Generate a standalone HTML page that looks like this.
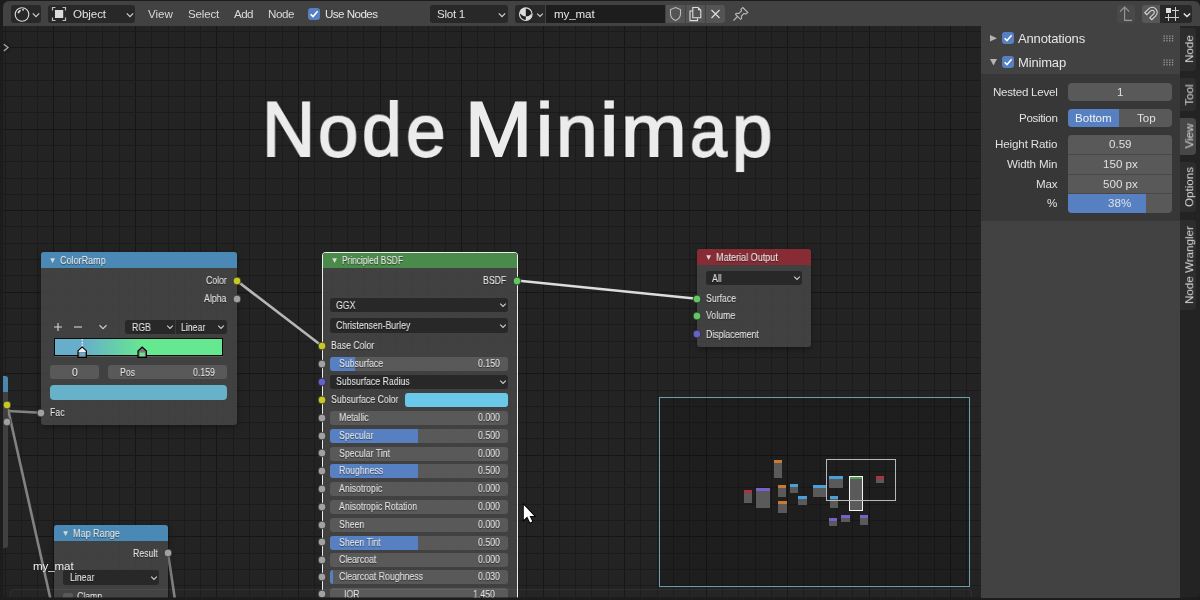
<!DOCTYPE html><html><head><meta charset="utf-8"><style>

*{box-sizing:border-box;margin:0;padding:0}
html,body{width:1200px;height:600px;overflow:hidden;background:#1c1c1c;font-family:"Liberation Sans", sans-serif;color:#e6e6e6}
.abs{position:absolute}
.t{position:absolute;white-space:nowrap;line-height:1;will-change:transform}

</style></head><body>
<div class="abs" style="left:3px;top:25px;width:1197px;height:573px;background:#232323;border-radius:0 0 5px 5px"></div>
<svg width="978" height="572" style="position:absolute;left:3px;top:26px"><rect x="2" y="0" width="1" height="572" fill="#1b1b1b"/><rect x="18" y="0" width="1" height="572" fill="#1b1b1b"/><rect x="34" y="0" width="1" height="572" fill="#1b1b1b"/><rect x="50" y="0" width="1" height="572" fill="#161616"/><rect x="67" y="0" width="1" height="572" fill="#1b1b1b"/><rect x="83" y="0" width="1" height="572" fill="#1b1b1b"/><rect x="99" y="0" width="1" height="572" fill="#1b1b1b"/><rect x="116" y="0" width="1" height="572" fill="#1b1b1b"/><rect x="132" y="0" width="1" height="572" fill="#161616"/><rect x="148" y="0" width="1" height="572" fill="#1b1b1b"/><rect x="165" y="0" width="1" height="572" fill="#1b1b1b"/><rect x="181" y="0" width="1" height="572" fill="#1b1b1b"/><rect x="197" y="0" width="1" height="572" fill="#1b1b1b"/><rect x="213" y="0" width="1" height="572" fill="#161616"/><rect x="230" y="0" width="1" height="572" fill="#1b1b1b"/><rect x="246" y="0" width="1" height="572" fill="#1b1b1b"/><rect x="262" y="0" width="1" height="572" fill="#1b1b1b"/><rect x="279" y="0" width="1" height="572" fill="#1b1b1b"/><rect x="295" y="0" width="1" height="572" fill="#161616"/><rect x="311" y="0" width="1" height="572" fill="#1b1b1b"/><rect x="328" y="0" width="1" height="572" fill="#1b1b1b"/><rect x="344" y="0" width="1" height="572" fill="#1b1b1b"/><rect x="360" y="0" width="1" height="572" fill="#1b1b1b"/><rect x="377" y="0" width="1" height="572" fill="#161616"/><rect x="393" y="0" width="1" height="572" fill="#1b1b1b"/><rect x="409" y="0" width="1" height="572" fill="#1b1b1b"/><rect x="425" y="0" width="1" height="572" fill="#1b1b1b"/><rect x="442" y="0" width="1" height="572" fill="#1b1b1b"/><rect x="458" y="0" width="1" height="572" fill="#161616"/><rect x="474" y="0" width="1" height="572" fill="#1b1b1b"/><rect x="491" y="0" width="1" height="572" fill="#1b1b1b"/><rect x="507" y="0" width="1" height="572" fill="#1b1b1b"/><rect x="523" y="0" width="1" height="572" fill="#1b1b1b"/><rect x="540" y="0" width="1" height="572" fill="#161616"/><rect x="556" y="0" width="1" height="572" fill="#1b1b1b"/><rect x="572" y="0" width="1" height="572" fill="#1b1b1b"/><rect x="588" y="0" width="1" height="572" fill="#1b1b1b"/><rect x="605" y="0" width="1" height="572" fill="#1b1b1b"/><rect x="621" y="0" width="1" height="572" fill="#161616"/><rect x="637" y="0" width="1" height="572" fill="#1b1b1b"/><rect x="654" y="0" width="1" height="572" fill="#1b1b1b"/><rect x="670" y="0" width="1" height="572" fill="#1b1b1b"/><rect x="686" y="0" width="1" height="572" fill="#1b1b1b"/><rect x="703" y="0" width="1" height="572" fill="#161616"/><rect x="719" y="0" width="1" height="572" fill="#1b1b1b"/><rect x="735" y="0" width="1" height="572" fill="#1b1b1b"/><rect x="752" y="0" width="1" height="572" fill="#1b1b1b"/><rect x="768" y="0" width="1" height="572" fill="#1b1b1b"/><rect x="784" y="0" width="1" height="572" fill="#161616"/><rect x="800" y="0" width="1" height="572" fill="#1b1b1b"/><rect x="817" y="0" width="1" height="572" fill="#1b1b1b"/><rect x="833" y="0" width="1" height="572" fill="#1b1b1b"/><rect x="849" y="0" width="1" height="572" fill="#1b1b1b"/><rect x="866" y="0" width="1" height="572" fill="#161616"/><rect x="882" y="0" width="1" height="572" fill="#1b1b1b"/><rect x="898" y="0" width="1" height="572" fill="#1b1b1b"/><rect x="915" y="0" width="1" height="572" fill="#1b1b1b"/><rect x="931" y="0" width="1" height="572" fill="#1b1b1b"/><rect x="947" y="0" width="1" height="572" fill="#161616"/><rect x="963" y="0" width="1" height="572" fill="#1b1b1b"/><rect x="0" y="5" width="978" height="1" fill="#1b1b1b"/><rect x="0" y="21" width="978" height="1" fill="#161616"/><rect x="0" y="37" width="978" height="1" fill="#1b1b1b"/><rect x="0" y="54" width="978" height="1" fill="#1b1b1b"/><rect x="0" y="70" width="978" height="1" fill="#1b1b1b"/><rect x="0" y="86" width="978" height="1" fill="#1b1b1b"/><rect x="0" y="103" width="978" height="1" fill="#161616"/><rect x="0" y="119" width="978" height="1" fill="#1b1b1b"/><rect x="0" y="135" width="978" height="1" fill="#1b1b1b"/><rect x="0" y="152" width="978" height="1" fill="#1b1b1b"/><rect x="0" y="168" width="978" height="1" fill="#1b1b1b"/><rect x="0" y="184" width="978" height="1" fill="#161616"/><rect x="0" y="200" width="978" height="1" fill="#1b1b1b"/><rect x="0" y="217" width="978" height="1" fill="#1b1b1b"/><rect x="0" y="233" width="978" height="1" fill="#1b1b1b"/><rect x="0" y="249" width="978" height="1" fill="#1b1b1b"/><rect x="0" y="266" width="978" height="1" fill="#161616"/><rect x="0" y="282" width="978" height="1" fill="#1b1b1b"/><rect x="0" y="298" width="978" height="1" fill="#1b1b1b"/><rect x="0" y="315" width="978" height="1" fill="#1b1b1b"/><rect x="0" y="331" width="978" height="1" fill="#1b1b1b"/><rect x="0" y="347" width="978" height="1" fill="#161616"/><rect x="0" y="364" width="978" height="1" fill="#1b1b1b"/><rect x="0" y="380" width="978" height="1" fill="#1b1b1b"/><rect x="0" y="396" width="978" height="1" fill="#1b1b1b"/><rect x="0" y="412" width="978" height="1" fill="#1b1b1b"/><rect x="0" y="429" width="978" height="1" fill="#161616"/><rect x="0" y="445" width="978" height="1" fill="#1b1b1b"/><rect x="0" y="461" width="978" height="1" fill="#1b1b1b"/><rect x="0" y="478" width="978" height="1" fill="#1b1b1b"/><rect x="0" y="494" width="978" height="1" fill="#1b1b1b"/><rect x="0" y="510" width="978" height="1" fill="#161616"/><rect x="0" y="527" width="978" height="1" fill="#1b1b1b"/><rect x="0" y="543" width="978" height="1" fill="#1b1b1b"/><rect x="0" y="559" width="978" height="1" fill="#1b1b1b"/></svg>
<div class="abs" style="left:3px;top:41px;width:7px;height:13px;background:#1e1e1e;border-radius:0 5px 5px 0;"></div>
<svg class="abs" style="left:3px;top:43px;" width="8" height="10" viewBox="0 0 8 10"><path d="M0.8 1.3 L5 4.6 L0.8 7.9" fill="none" stroke="#a8a8a8" stroke-width="1.3"/></svg>
<div class="t" style="left:261.92px;top:91.20px;font-size:77px;color:#ececec;-webkit-text-stroke:1.8px #ececec;text-shadow:1px 1px 1px rgba(0,0,0,0.7);transform:scale(0.9556,1.0);transform-origin:0 66px">N</div>
<div class="t" style="left:318.12px;top:91.20px;font-size:77px;color:#ececec;-webkit-text-stroke:1.8px #ececec;text-shadow:1px 1px 1px rgba(0,0,0,0.7);transform:scale(0.9410,0.94);transform-origin:0 66px">o</div>
<div class="t" style="left:362.15px;top:91.20px;font-size:77px;color:#ececec;-webkit-text-stroke:1.8px #ececec;text-shadow:1px 1px 1px rgba(0,0,0,0.7);transform:scale(0.9270,0.966);transform-origin:0 66px">d</div>
<div class="t" style="left:405.66px;top:91.20px;font-size:77px;color:#ececec;-webkit-text-stroke:1.8px #ececec;text-shadow:1px 1px 1px rgba(0,0,0,0.7);transform:scale(0.9211,0.94);transform-origin:0 66px">e</div>
<div class="t" style="left:465.46px;top:91.20px;font-size:77px;color:#ececec;-webkit-text-stroke:1.8px #ececec;text-shadow:1px 1px 1px rgba(0,0,0,0.7);transform:scale(1.0481,1.0);transform-origin:0 66px">M</div>
<div class="t" style="left:536.00px;top:91.20px;font-size:77px;color:#ececec;-webkit-text-stroke:1.8px #ececec;text-shadow:1px 1px 1px rgba(0,0,0,0.7);transform:scale(1.0000,0.96);transform-origin:0 66px">i</div>
<div class="t" style="left:556.11px;top:91.20px;font-size:77px;color:#ececec;-webkit-text-stroke:1.8px #ececec;text-shadow:1px 1px 1px rgba(0,0,0,0.7);transform:scale(0.9714,0.94);transform-origin:0 66px">n</div>
<div class="t" style="left:600.39px;top:91.20px;font-size:77px;color:#ececec;-webkit-text-stroke:1.8px #ececec;text-shadow:1px 1px 1px rgba(0,0,0,0.7);transform:scale(1.0778,0.96);transform-origin:0 66px">i</div>
<div class="t" style="left:620.81px;top:91.20px;font-size:77px;color:#ececec;-webkit-text-stroke:1.8px #ececec;text-shadow:1px 1px 1px rgba(0,0,0,0.7);transform:scale(1.0232,0.94);transform-origin:0 66px">m</div>
<div class="t" style="left:689.68px;top:91.20px;font-size:77px;color:#ececec;-webkit-text-stroke:1.8px #ececec;text-shadow:1px 1px 1px rgba(0,0,0,0.7);transform:scale(0.8619,0.94);transform-origin:0 66px">a</div>
<div class="t" style="left:732.24px;top:91.20px;font-size:77px;color:#ececec;-webkit-text-stroke:1.8px #ececec;text-shadow:1px 1px 1px rgba(0,0,0,0.7);transform:scale(0.9405,0.94);transform-origin:0 66px">p</div>
<svg class="abs" style="left:0px;top:0px;" width="1200" height="600" viewBox="0 0 1200 600">
<line x1="8" y1="411" x2="41" y2="412.7" stroke="#828282" stroke-width="2.6"/>
<line x1="8" y1="409" x2="50.7" y2="600" stroke="#828282" stroke-width="2.6"/>
<line x1="236.8" y1="280.8" x2="321.7" y2="345.8" stroke="#b6b6b6" stroke-width="2.6"/>
<line x1="516.7" y1="280.5" x2="697" y2="298.7" stroke="#dcdcdc" stroke-width="2.5"/>
<line x1="168" y1="553" x2="175" y2="600" stroke="#828282" stroke-width="2.6"/>
</svg>
<div class="abs" style="left:3px;top:376px;width:5px;height:172px;background:rgba(72,72,72,0.82);border-radius:0 3px 3px 0;overflow:hidden"><div style="height:16px;background:#4a86b0"></div></div>
<svg class="abs" style="left:2px;top:399.6px;" width="10" height="10" viewBox="0 0 10 10"><circle cx="5" cy="5" r="3.9" fill="#c7c729" stroke="#202020" stroke-width="0.7"/></svg>
<svg class="abs" style="left:2px;top:417px;" width="10" height="10" viewBox="0 0 10 10"><circle cx="5" cy="5" r="3.9" fill="#a1a1a1" stroke="#202020" stroke-width="0.7"/></svg>
<div class="abs" style="left:41px;top:252px;width:196px;height:173px;background:rgba(72,72,72,0.82);border-radius:3px;overflow:hidden;box-shadow:0 2px 6px rgba(0,0,0,0.35);"><div style="position:absolute;left:0;top:0;width:100%;height:16px;background:#4a89b5"></div></div>
<svg class="abs" style="left:49px;top:258px;" width="8" height="8" viewBox="0 0 8 8"><path d="M1.2 0.3 L6 0.3 L3.6 4.9 Z" fill="#d8d8d8"/></svg>
<div class="t" style="left:60.00px;top:255.71px;font-size:10.4px;color:#e8e8e8;letter-spacing:0.000px;text-shadow:0 1px 1px rgba(0,0,0,0.55);transform:scaleX(0.8700);transform-origin:0 0;-webkit-text-stroke:0.08px #e4e4e4;">ColorRamp</div>
<div class="t" style="left:205.83px;top:276.11px;font-size:10.4px;color:#e4e4e4;letter-spacing:0.000px;text-shadow:0 1px 1px rgba(0,0,0,0.55);transform:scaleX(0.8400);transform-origin:0 0;-webkit-text-stroke:0.08px #e4e4e4;">Color</div>
<div class="t" style="left:204.36px;top:294.11px;font-size:10.4px;color:#e4e4e4;letter-spacing:0.000px;text-shadow:0 1px 1px rgba(0,0,0,0.55);transform:scaleX(0.8400);transform-origin:0 0;-webkit-text-stroke:0.08px #e4e4e4;">Alpha</div>
<svg class="abs" style="left:231.8px;top:275.8px;" width="10" height="10" viewBox="0 0 10 10"><circle cx="5" cy="5" r="3.9" fill="#c7c729" stroke="#202020" stroke-width="0.7"/></svg>
<svg class="abs" style="left:231.8px;top:293.7px;" width="10" height="10" viewBox="0 0 10 10"><circle cx="5" cy="5" r="3.9" fill="#a1a1a1" stroke="#202020" stroke-width="0.7"/></svg>
<svg class="abs" style="left:52px;top:321px;" width="12" height="12" viewBox="0 0 12 12"><path d="M2 6 H10 M6 2 V10" stroke="#d8d8d8" stroke-width="1.1"/></svg>
<svg class="abs" style="left:72px;top:321px;" width="12" height="12" viewBox="0 0 12 12"><path d="M2 6 H10" stroke="#d8d8d8" stroke-width="1.1"/></svg>
<svg class="abs" style="left:96.5px;top:320.5px;" width="12" height="12" viewBox="0 0 12 12"><path d="M2.5 4.25 L6 7.75 L9.5 4.25" fill="none" stroke="#cfcfcf" stroke-width="1.1"/></svg>
<div class="abs" style="left:125px;top:320px;width:102px;height:14px;background:#282828;border-radius:3px;"></div>
<div class="abs" style="left:175px;top:320px;width:1px;height:14px;background:#3a3a3a;"></div>
<div class="t" style="left:131.50px;top:323.11px;font-size:10.4px;color:#e4e4e4;letter-spacing:0.000px;text-shadow:0 1px 1px rgba(0,0,0,0.55);transform:scaleX(0.8400);transform-origin:0 0;-webkit-text-stroke:0.08px #e4e4e4;">RGB</div>
<svg class="abs" style="left:163.5px;top:321px;" width="12" height="12" viewBox="0 0 12 12"><path d="M3.2 4.6 L6 7.4 L8.8 4.6" fill="none" stroke="#d0d0d0" stroke-width="1.1"/></svg>
<div class="t" style="left:181.00px;top:323.11px;font-size:10.4px;color:#e4e4e4;letter-spacing:0.000px;text-shadow:0 1px 1px rgba(0,0,0,0.55);transform:scaleX(0.8400);transform-origin:0 0;-webkit-text-stroke:0.08px #e4e4e4;">Linear</div>
<svg class="abs" style="left:215px;top:321px;" width="12" height="12" viewBox="0 0 12 12"><path d="M3.2 4.6 L6 7.4 L8.8 4.6" fill="none" stroke="#d0d0d0" stroke-width="1.1"/></svg>
<div class="abs" style="left:54px;top:338px;width:169px;height:18px;border:1px solid #0a0a0a;background:linear-gradient(to right,#67aecb 0px,#67aecb 28px,#66e890 88px,#66e890 100%)"></div>
<div class="abs" style="left:54px;top:356px;width:169px;height:1px;background:#5a5a5a;"></div>
<svg class="abs" style="left:76px;top:338px;" width="13" height="21" viewBox="0 0 13 21"><path d="M6.2 1 V9" stroke="#fff" stroke-width="1.1" stroke-dasharray="1.6 1.2"/><path d="M2 13 L6.2 9 L10.4 13 V19.3 H2 Z" fill="#808080" stroke="#000" stroke-width="1.2"/><path d="M2.7 13 L6.2 9.8 L9.7 13 V14 H2.7 Z" fill="#f0f0f0"/><rect x="3.6" y="14.6" width="5.2" height="3.6" fill="#67aecb"/></svg>
<svg class="abs" style="left:136px;top:338px;" width="13" height="21" viewBox="0 0 13 21"><path d="M2 13 L6.2 9 L10.4 13 V19.3 H2 Z" fill="#7a7a7a" stroke="#000" stroke-width="1.2"/><rect x="3.6" y="14.6" width="5.2" height="3.6" fill="#66e890"/></svg>
<div class="abs" style="left:50px;top:365px;width:49px;height:14px;background:#595959;border-radius:3px;"></div>
<div class="t" style="left:71.61px;top:367.61px;font-size:10.4px;color:#e4e4e4;letter-spacing:0.000px;text-shadow:0 1px 1px rgba(0,0,0,0.55);-webkit-text-stroke:0.08px #e4e4e4;">0</div>
<div class="abs" style="left:108px;top:365px;width:119px;height:14px;background:#595959;border-radius:3px;"></div>
<div class="t" style="left:120.00px;top:367.61px;font-size:10.4px;color:#e4e4e4;letter-spacing:0.000px;text-shadow:0 1px 1px rgba(0,0,0,0.55);transform:scaleX(0.8400);transform-origin:0 0;-webkit-text-stroke:0.08px #e4e4e4;">Pos</div>
<div class="t" style="left:193.14px;top:367.61px;font-size:10.4px;color:#e4e4e4;letter-spacing:0.000px;text-shadow:0 1px 1px rgba(0,0,0,0.55);transform:scaleX(0.8400);transform-origin:0 0;-webkit-text-stroke:0.08px #e4e4e4;">0.159</div>
<div class="abs" style="left:50px;top:385px;width:177px;height:15px;background:#67b2c9;border-radius:4px;"></div>
<svg class="abs" style="left:35.8px;top:407.7px;" width="10" height="10" viewBox="0 0 10 10"><circle cx="5" cy="5" r="3.9" fill="#a1a1a1" stroke="#202020" stroke-width="0.7"/></svg>
<div class="t" style="left:50.00px;top:408.11px;font-size:10.4px;color:#e4e4e4;letter-spacing:0.000px;text-shadow:0 1px 1px rgba(0,0,0,0.55);transform:scaleX(0.8400);transform-origin:0 0;-webkit-text-stroke:0.08px #e4e4e4;">Fac</div>
<div class="abs" style="left:54px;top:525px;width:114px;height:80px;background:rgba(72,72,72,0.82);border-radius:3px;overflow:hidden;box-shadow:0 2px 6px rgba(0,0,0,0.35);"><div style="position:absolute;left:0;top:0;width:100%;height:16px;background:#4a89b5"></div></div>
<svg class="abs" style="left:62px;top:531px;" width="8" height="8" viewBox="0 0 8 8"><path d="M1.2 0.3 L6 0.3 L3.6 4.9 Z" fill="#d8d8d8"/></svg>
<div class="t" style="left:73.00px;top:528.71px;font-size:10.4px;color:#e8e8e8;letter-spacing:0.000px;text-shadow:0 1px 1px rgba(0,0,0,0.55);transform:scaleX(0.8700);transform-origin:0 0;-webkit-text-stroke:0.08px #e4e4e4;">Map Range</div>
<div class="t" style="left:133.24px;top:548.61px;font-size:10.4px;color:#e4e4e4;letter-spacing:0.000px;text-shadow:0 1px 1px rgba(0,0,0,0.55);transform:scaleX(0.8400);transform-origin:0 0;-webkit-text-stroke:0.08px #e4e4e4;">Result</div>
<svg class="abs" style="left:163px;top:548px;" width="10" height="10" viewBox="0 0 10 10"><circle cx="5" cy="5" r="3.9" fill="#a1a1a1" stroke="#202020" stroke-width="0.7"/></svg>
<div class="abs" style="left:63px;top:570px;width:96px;height:15px;background:#282828;border-radius:3px;"></div>
<div class="t" style="left:69.50px;top:573.11px;font-size:10.4px;color:#e4e4e4;letter-spacing:0.000px;text-shadow:0 1px 1px rgba(0,0,0,0.55);transform:scaleX(0.8400);transform-origin:0 0;-webkit-text-stroke:0.08px #e4e4e4;">Linear</div>
<svg class="abs" style="left:148px;top:571.5px;" width="12" height="12" viewBox="0 0 12 12"><path d="M3.2 4.6 L6 7.4 L8.8 4.6" fill="none" stroke="#d0d0d0" stroke-width="1.1"/></svg>
<div class="abs" style="left:63px;top:593px;width:10px;height:10px;background:#595959;border-radius:2px;"></div>
<div class="t" style="left:76.50px;top:591.61px;font-size:10.4px;color:#e4e4e4;letter-spacing:0.000px;text-shadow:0 1px 1px rgba(0,0,0,0.55);transform:scaleX(0.8400);transform-origin:0 0;-webkit-text-stroke:0.08px #e4e4e4;">Clamp</div>
<div class="abs" style="left:323px;top:253px;width:194px;height:360px;background:rgba(72,72,72,0.82);border-radius:3px;overflow:hidden;box-shadow:0 0 0 1px #e8eee8;"><div style="position:absolute;left:0;top:0;width:100%;height:15px;background:#4a8a4a"></div></div>
<svg class="abs" style="left:331px;top:258px;" width="8" height="8" viewBox="0 0 8 8"><path d="M1.2 0.3 L6 0.3 L3.6 4.9 Z" fill="#d8d8d8"/></svg>
<div class="t" style="left:342.00px;top:255.71px;font-size:10.4px;color:#e8e8e8;letter-spacing:0.000px;text-shadow:0 1px 1px rgba(0,0,0,0.55);transform:scaleX(0.8000);transform-origin:0 0;-webkit-text-stroke:0.08px #e4e4e4;">Principled BSDF</div>
<div class="t" style="left:483.40px;top:276.11px;font-size:10.4px;color:#e4e4e4;letter-spacing:0.000px;text-shadow:0 1px 1px rgba(0,0,0,0.55);transform:scaleX(0.8400);transform-origin:0 0;-webkit-text-stroke:0.08px #e4e4e4;">BSDF</div>
<svg class="abs" style="left:511.70000000000005px;top:275.5px;" width="10" height="10" viewBox="0 0 10 10"><circle cx="5" cy="5" r="3.9" fill="#63c763" stroke="#202020" stroke-width="0.7"/></svg>
<div class="abs" style="left:330px;top:298px;width:178px;height:14px;background:#282828;border-radius:3px;"></div>
<div class="t" style="left:336.00px;top:300.61px;font-size:10.4px;color:#e4e4e4;letter-spacing:0.000px;text-shadow:0 1px 1px rgba(0,0,0,0.55);transform:scaleX(0.8400);transform-origin:0 0;-webkit-text-stroke:0.08px #e4e4e4;">GGX</div>
<svg class="abs" style="left:497px;top:299px;" width="12" height="12" viewBox="0 0 12 12"><path d="M3.2 4.6 L6 7.4 L8.8 4.6" fill="none" stroke="#d0d0d0" stroke-width="1.1"/></svg>
<div class="abs" style="left:330px;top:318px;width:178px;height:15px;background:#282828;border-radius:3px;"></div>
<div class="t" style="left:336.00px;top:321.11px;font-size:10.4px;color:#e4e4e4;letter-spacing:0.000px;text-shadow:0 1px 1px rgba(0,0,0,0.55);transform:scaleX(0.8400);transform-origin:0 0;-webkit-text-stroke:0.08px #e4e4e4;">Christensen-Burley</div>
<svg class="abs" style="left:497px;top:319.5px;" width="12" height="12" viewBox="0 0 12 12"><path d="M3.2 4.6 L6 7.4 L8.8 4.6" fill="none" stroke="#d0d0d0" stroke-width="1.1"/></svg>
<svg class="abs" style="left:316.7px;top:340.8px;" width="10" height="10" viewBox="0 0 10 10"><circle cx="5" cy="5" r="3.9" fill="#c7c729" stroke="#202020" stroke-width="0.7"/></svg>
<div class="t" style="left:330.50px;top:341.11px;font-size:10.4px;color:#e4e4e4;letter-spacing:0.000px;text-shadow:0 1px 1px rgba(0,0,0,0.55);transform:scaleX(0.8400);transform-origin:0 0;-webkit-text-stroke:0.08px #e4e4e4;">Base Color</div>
<svg class="abs" style="left:316.7px;top:358.8px;" width="10" height="10" viewBox="0 0 10 10"><circle cx="5" cy="5" r="3.9" fill="#a1a1a1" stroke="#202020" stroke-width="0.7"/></svg>
<div class="abs" style="left:330px;top:357px;width:178px;height:14px;background:#595959;border-radius:3px;"></div>
<div class="abs" style="left:330px;top:357px;width:25px;height:14px;background:#5680c2;border-radius:3px;border-radius:3px 0 0 3px;"></div>
<div class="t" style="left:338.50px;top:359.11px;font-size:10.4px;color:#e4e4e4;letter-spacing:0.000px;text-shadow:0 1px 1px rgba(0,0,0,0.55);transform:scaleX(0.8400);transform-origin:0 0;-webkit-text-stroke:0.08px #e4e4e4;">Subsurface</div>
<div class="t" style="left:478.34px;top:359.11px;font-size:10.4px;color:#e4e4e4;letter-spacing:0.000px;text-shadow:0 1px 1px rgba(0,0,0,0.55);transform:scaleX(0.8400);transform-origin:0 0;-webkit-text-stroke:0.08px #e4e4e4;">0.150</div>
<svg class="abs" style="left:316.7px;top:376.8px;" width="10" height="10" viewBox="0 0 10 10"><circle cx="5" cy="5" r="3.9" fill="#6363c7" stroke="#202020" stroke-width="0.7"/></svg>
<div class="abs" style="left:330px;top:375px;width:178px;height:14px;background:#282828;border-radius:3px;"></div>
<div class="t" style="left:336.00px;top:377.11px;font-size:10.4px;color:#e4e4e4;letter-spacing:0.000px;text-shadow:0 1px 1px rgba(0,0,0,0.55);transform:scaleX(0.8400);transform-origin:0 0;-webkit-text-stroke:0.08px #e4e4e4;">Subsurface Radius</div>
<svg class="abs" style="left:497px;top:376.3px;" width="12" height="12" viewBox="0 0 12 12"><path d="M3.2 4.6 L6 7.4 L8.8 4.6" fill="none" stroke="#d0d0d0" stroke-width="1.1"/></svg>
<svg class="abs" style="left:316.7px;top:394.8px;" width="10" height="10" viewBox="0 0 10 10"><circle cx="5" cy="5" r="3.9" fill="#c7c729" stroke="#202020" stroke-width="0.7"/></svg>
<div class="t" style="left:330.50px;top:395.11px;font-size:10.4px;color:#e4e4e4;letter-spacing:0.000px;text-shadow:0 1px 1px rgba(0,0,0,0.55);transform:scaleX(0.8400);transform-origin:0 0;-webkit-text-stroke:0.08px #e4e4e4;">Subsurface Color</div>
<div class="abs" style="left:405px;top:393px;width:103px;height:14px;background:#6ac8e8;border-radius:3px;"></div>
<svg class="abs" style="left:316.7px;top:412.5px;" width="10" height="10" viewBox="0 0 10 10"><circle cx="5" cy="5" r="3.9" fill="#a1a1a1" stroke="#202020" stroke-width="0.7"/></svg>
<div class="abs" style="left:330px;top:411px;width:178px;height:14px;background:#595959;border-radius:3px;"></div>
<div class="t" style="left:338.50px;top:412.81px;font-size:10.4px;color:#e4e4e4;letter-spacing:0.000px;text-shadow:0 1px 1px rgba(0,0,0,0.55);transform:scaleX(0.8400);transform-origin:0 0;-webkit-text-stroke:0.08px #e4e4e4;">Metallic</div>
<div class="t" style="left:478.34px;top:412.81px;font-size:10.4px;color:#e4e4e4;letter-spacing:0.000px;text-shadow:0 1px 1px rgba(0,0,0,0.55);transform:scaleX(0.8400);transform-origin:0 0;-webkit-text-stroke:0.08px #e4e4e4;">0.000</div>
<svg class="abs" style="left:316.7px;top:430.5px;" width="10" height="10" viewBox="0 0 10 10"><circle cx="5" cy="5" r="3.9" fill="#a1a1a1" stroke="#202020" stroke-width="0.7"/></svg>
<div class="abs" style="left:330px;top:429px;width:178px;height:14px;background:#595959;border-radius:3px;"></div>
<div class="abs" style="left:330px;top:429px;width:88px;height:14px;background:#5680c2;border-radius:3px;border-radius:3px 0 0 3px;"></div>
<div class="t" style="left:338.50px;top:430.81px;font-size:10.4px;color:#e4e4e4;letter-spacing:0.000px;text-shadow:0 1px 1px rgba(0,0,0,0.55);transform:scaleX(0.8400);transform-origin:0 0;-webkit-text-stroke:0.08px #e4e4e4;">Specular</div>
<div class="t" style="left:478.34px;top:430.81px;font-size:10.4px;color:#e4e4e4;letter-spacing:0.000px;text-shadow:0 1px 1px rgba(0,0,0,0.55);transform:scaleX(0.8400);transform-origin:0 0;-webkit-text-stroke:0.08px #e4e4e4;">0.500</div>
<svg class="abs" style="left:316.7px;top:448.3px;" width="10" height="10" viewBox="0 0 10 10"><circle cx="5" cy="5" r="3.9" fill="#a1a1a1" stroke="#202020" stroke-width="0.7"/></svg>
<div class="abs" style="left:330px;top:447px;width:178px;height:14px;background:#595959;border-radius:3px;"></div>
<div class="t" style="left:338.50px;top:448.61px;font-size:10.4px;color:#e4e4e4;letter-spacing:0.000px;text-shadow:0 1px 1px rgba(0,0,0,0.55);transform:scaleX(0.8400);transform-origin:0 0;-webkit-text-stroke:0.08px #e4e4e4;">Specular Tint</div>
<div class="t" style="left:478.34px;top:448.61px;font-size:10.4px;color:#e4e4e4;letter-spacing:0.000px;text-shadow:0 1px 1px rgba(0,0,0,0.55);transform:scaleX(0.8400);transform-origin:0 0;-webkit-text-stroke:0.08px #e4e4e4;">0.000</div>
<svg class="abs" style="left:316.7px;top:466.0px;" width="10" height="10" viewBox="0 0 10 10"><circle cx="5" cy="5" r="3.9" fill="#a1a1a1" stroke="#202020" stroke-width="0.7"/></svg>
<div class="abs" style="left:330px;top:464px;width:178px;height:14px;background:#595959;border-radius:3px;"></div>
<div class="abs" style="left:330px;top:464px;width:88px;height:14px;background:#5680c2;border-radius:3px;border-radius:3px 0 0 3px;"></div>
<div class="t" style="left:338.50px;top:466.31px;font-size:10.4px;color:#e4e4e4;letter-spacing:0.000px;text-shadow:0 1px 1px rgba(0,0,0,0.55);transform:scaleX(0.8400);transform-origin:0 0;-webkit-text-stroke:0.08px #e4e4e4;">Roughness</div>
<div class="t" style="left:478.34px;top:466.31px;font-size:10.4px;color:#e4e4e4;letter-spacing:0.000px;text-shadow:0 1px 1px rgba(0,0,0,0.55);transform:scaleX(0.8400);transform-origin:0 0;-webkit-text-stroke:0.08px #e4e4e4;">0.500</div>
<svg class="abs" style="left:316.7px;top:484.0px;" width="10" height="10" viewBox="0 0 10 10"><circle cx="5" cy="5" r="3.9" fill="#a1a1a1" stroke="#202020" stroke-width="0.7"/></svg>
<div class="abs" style="left:330px;top:482px;width:178px;height:14px;background:#595959;border-radius:3px;"></div>
<div class="t" style="left:338.50px;top:484.31px;font-size:10.4px;color:#e4e4e4;letter-spacing:0.000px;text-shadow:0 1px 1px rgba(0,0,0,0.55);transform:scaleX(0.8400);transform-origin:0 0;-webkit-text-stroke:0.08px #e4e4e4;">Anisotropic</div>
<div class="t" style="left:478.34px;top:484.31px;font-size:10.4px;color:#e4e4e4;letter-spacing:0.000px;text-shadow:0 1px 1px rgba(0,0,0,0.55);transform:scaleX(0.8400);transform-origin:0 0;-webkit-text-stroke:0.08px #e4e4e4;">0.000</div>
<svg class="abs" style="left:316.7px;top:501.7px;" width="10" height="10" viewBox="0 0 10 10"><circle cx="5" cy="5" r="3.9" fill="#a1a1a1" stroke="#202020" stroke-width="0.7"/></svg>
<div class="abs" style="left:330px;top:500px;width:178px;height:14px;background:#595959;border-radius:3px;"></div>
<div class="t" style="left:338.50px;top:502.01px;font-size:10.4px;color:#e4e4e4;letter-spacing:0.000px;text-shadow:0 1px 1px rgba(0,0,0,0.55);transform:scaleX(0.8400);transform-origin:0 0;-webkit-text-stroke:0.08px #e4e4e4;">Anisotropic Rotation</div>
<div class="t" style="left:478.34px;top:502.01px;font-size:10.4px;color:#e4e4e4;letter-spacing:0.000px;text-shadow:0 1px 1px rgba(0,0,0,0.55);transform:scaleX(0.8400);transform-origin:0 0;-webkit-text-stroke:0.08px #e4e4e4;">0.000</div>
<svg class="abs" style="left:316.7px;top:520.0px;" width="10" height="10" viewBox="0 0 10 10"><circle cx="5" cy="5" r="3.9" fill="#a1a1a1" stroke="#202020" stroke-width="0.7"/></svg>
<div class="abs" style="left:330px;top:518px;width:178px;height:14px;background:#595959;border-radius:3px;"></div>
<div class="t" style="left:338.50px;top:520.31px;font-size:10.4px;color:#e4e4e4;letter-spacing:0.000px;text-shadow:0 1px 1px rgba(0,0,0,0.55);transform:scaleX(0.8400);transform-origin:0 0;-webkit-text-stroke:0.08px #e4e4e4;">Sheen</div>
<div class="t" style="left:478.34px;top:520.31px;font-size:10.4px;color:#e4e4e4;letter-spacing:0.000px;text-shadow:0 1px 1px rgba(0,0,0,0.55);transform:scaleX(0.8400);transform-origin:0 0;-webkit-text-stroke:0.08px #e4e4e4;">0.000</div>
<svg class="abs" style="left:316.7px;top:537.3px;" width="10" height="10" viewBox="0 0 10 10"><circle cx="5" cy="5" r="3.9" fill="#a1a1a1" stroke="#202020" stroke-width="0.7"/></svg>
<div class="abs" style="left:330px;top:536px;width:178px;height:14px;background:#595959;border-radius:3px;"></div>
<div class="abs" style="left:330px;top:536px;width:88px;height:14px;background:#5680c2;border-radius:3px;border-radius:3px 0 0 3px;"></div>
<div class="t" style="left:338.50px;top:537.61px;font-size:10.4px;color:#e4e4e4;letter-spacing:0.000px;text-shadow:0 1px 1px rgba(0,0,0,0.55);transform:scaleX(0.8400);transform-origin:0 0;-webkit-text-stroke:0.08px #e4e4e4;">Sheen Tint</div>
<div class="t" style="left:478.34px;top:537.61px;font-size:10.4px;color:#e4e4e4;letter-spacing:0.000px;text-shadow:0 1px 1px rgba(0,0,0,0.55);transform:scaleX(0.8400);transform-origin:0 0;-webkit-text-stroke:0.08px #e4e4e4;">0.500</div>
<svg class="abs" style="left:316.7px;top:555.0px;" width="10" height="10" viewBox="0 0 10 10"><circle cx="5" cy="5" r="3.9" fill="#a1a1a1" stroke="#202020" stroke-width="0.7"/></svg>
<div class="abs" style="left:330px;top:553px;width:178px;height:14px;background:#595959;border-radius:3px;"></div>
<div class="t" style="left:338.50px;top:555.31px;font-size:10.4px;color:#e4e4e4;letter-spacing:0.000px;text-shadow:0 1px 1px rgba(0,0,0,0.55);transform:scaleX(0.8400);transform-origin:0 0;-webkit-text-stroke:0.08px #e4e4e4;">Clearcoat</div>
<div class="t" style="left:478.34px;top:555.31px;font-size:10.4px;color:#e4e4e4;letter-spacing:0.000px;text-shadow:0 1px 1px rgba(0,0,0,0.55);transform:scaleX(0.8400);transform-origin:0 0;-webkit-text-stroke:0.08px #e4e4e4;">0.000</div>
<svg class="abs" style="left:316.7px;top:572.0px;" width="10" height="10" viewBox="0 0 10 10"><circle cx="5" cy="5" r="3.9" fill="#a1a1a1" stroke="#202020" stroke-width="0.7"/></svg>
<div class="abs" style="left:330px;top:570px;width:178px;height:14px;background:#595959;border-radius:3px;"></div>
<div class="abs" style="left:330px;top:570px;width:3px;height:14px;background:#5680c2;border-radius:3px;border-radius:3px 0 0 3px;"></div>
<div class="t" style="left:338.50px;top:572.31px;font-size:10.4px;color:#e4e4e4;letter-spacing:0.000px;text-shadow:0 1px 1px rgba(0,0,0,0.55);transform:scaleX(0.8400);transform-origin:0 0;-webkit-text-stroke:0.08px #e4e4e4;">Clearcoat Roughness</div>
<div class="t" style="left:478.34px;top:572.31px;font-size:10.4px;color:#e4e4e4;letter-spacing:0.000px;text-shadow:0 1px 1px rgba(0,0,0,0.55);transform:scaleX(0.8400);transform-origin:0 0;-webkit-text-stroke:0.08px #e4e4e4;">0.030</div>
<svg class="abs" style="left:316.7px;top:589.4px;" width="10" height="10" viewBox="0 0 10 10"><circle cx="5" cy="5" r="3.9" fill="#a1a1a1" stroke="#202020" stroke-width="0.7"/></svg>
<div class="abs" style="left:330px;top:588px;width:178px;height:14px;background:#595959;border-radius:3px;"></div>
<div class="t" style="left:344.00px;top:589.71px;font-size:10.4px;color:#e4e4e4;letter-spacing:0.000px;text-shadow:0 1px 1px rgba(0,0,0,0.55);transform:scaleX(0.8400);transform-origin:0 0;-webkit-text-stroke:0.08px #e4e4e4;">IOR</div>
<div class="t" style="left:473.14px;top:589.71px;font-size:10.4px;color:#e4e4e4;letter-spacing:0.000px;text-shadow:0 1px 1px rgba(0,0,0,0.55);transform:scaleX(0.8400);transform-origin:0 0;-webkit-text-stroke:0.08px #e4e4e4;">1.450</div>
<div class="abs" style="left:697px;top:249px;width:114px;height:98px;background:rgba(72,72,72,0.82);border-radius:3px;overflow:hidden;box-shadow:0 2px 6px rgba(0,0,0,0.35);"><div style="position:absolute;left:0;top:0;width:100%;height:16px;background:#872b34"></div></div>
<svg class="abs" style="left:705px;top:255px;" width="8" height="8" viewBox="0 0 8 8"><path d="M1.2 0.3 L6 0.3 L3.6 4.9 Z" fill="#d8d8d8"/></svg>
<div class="t" style="left:716.00px;top:252.71px;font-size:10.4px;color:#e8e8e8;letter-spacing:0.000px;text-shadow:0 1px 1px rgba(0,0,0,0.55);transform:scaleX(0.8700);transform-origin:0 0;-webkit-text-stroke:0.08px #e4e4e4;">Material Output</div>
<div class="abs" style="left:706px;top:271px;width:96px;height:14px;background:#282828;border-radius:3px;"></div>
<div class="t" style="left:712.00px;top:273.61px;font-size:10.4px;color:#e4e4e4;letter-spacing:0.000px;text-shadow:0 1px 1px rgba(0,0,0,0.55);transform:scaleX(0.8400);transform-origin:0 0;-webkit-text-stroke:0.08px #e4e4e4;">All</div>
<svg class="abs" style="left:791px;top:272px;" width="12" height="12" viewBox="0 0 12 12"><path d="M3.2 4.6 L6 7.4 L8.8 4.6" fill="none" stroke="#d0d0d0" stroke-width="1.1"/></svg>
<svg class="abs" style="left:692px;top:293.7px;" width="10" height="10" viewBox="0 0 10 10"><circle cx="5" cy="5" r="3.9" fill="#63c763" stroke="#202020" stroke-width="0.7"/></svg>
<div class="t" style="left:706.00px;top:294.01px;font-size:10.4px;color:#e4e4e4;letter-spacing:0.000px;text-shadow:0 1px 1px rgba(0,0,0,0.55);transform:scaleX(0.8400);transform-origin:0 0;-webkit-text-stroke:0.08px #e4e4e4;">Surface</div>
<svg class="abs" style="left:692px;top:311px;" width="10" height="10" viewBox="0 0 10 10"><circle cx="5" cy="5" r="3.9" fill="#63c763" stroke="#202020" stroke-width="0.7"/></svg>
<div class="t" style="left:706.00px;top:311.31px;font-size:10.4px;color:#e4e4e4;letter-spacing:0.000px;text-shadow:0 1px 1px rgba(0,0,0,0.55);transform:scaleX(0.8400);transform-origin:0 0;-webkit-text-stroke:0.08px #e4e4e4;">Volume</div>
<svg class="abs" style="left:692px;top:329.4px;" width="10" height="10" viewBox="0 0 10 10"><circle cx="5" cy="5" r="3.9" fill="#6363c7" stroke="#202020" stroke-width="0.7"/></svg>
<div class="t" style="left:706.00px;top:329.71px;font-size:10.4px;color:#e4e4e4;letter-spacing:0.000px;text-shadow:0 1px 1px rgba(0,0,0,0.55);transform:scaleX(0.8400);transform-origin:0 0;-webkit-text-stroke:0.08px #e4e4e4;">Displacement</div>
<svg class="abs" style="left:521px;top:502px;" width="18" height="24" viewBox="0 0 18 24"><path d="M2.8 3 L2.8 17.8 L6.2 14.6 L9.1 20.6 L11.3 19.6 L8.6 13.9 L13.2 13.9 Z" fill="#fff" stroke="#000" stroke-width="1.8" paint-order="stroke" stroke-linejoin="miter"/></svg>
<div class="t" style="left:32.50px;top:560.08px;font-size:11.6px;color:#f4f4f4;letter-spacing:-0.125px;text-shadow:0 0 1px rgba(0,0,0,0.6);">my_mat</div>
<div class="abs" style="left:659px;top:397px;width:311px;height:190px;background:rgba(0,0,0,0.14);border:1px solid #6a9eb0;"></div>
<div class="abs" style="left:744px;top:489.7px;width:8px;height:13px;background:#5a5a5a;border-top:3px solid #b03040"></div>
<div class="abs" style="left:756px;top:488px;width:14px;height:19.6px;background:#5a5a5a;border-top:3px solid #7a5fcf"></div>
<div class="abs" style="left:774px;top:459.7px;width:8px;height:18px;background:#5a5a5a;border-top:3px solid #c87a32"></div>
<div class="abs" style="left:778px;top:485px;width:8px;height:11.7px;background:#5a5a5a;border-top:3px solid #c87a32"></div>
<div class="abs" style="left:778px;top:500.7px;width:9px;height:12px;background:#5a5a5a;border-top:3px solid #c87a32"></div>
<div class="abs" style="left:790px;top:484px;width:8px;height:8.7px;background:#5a5a5a;border-top:3px solid #4a9fd8"></div>
<div class="abs" style="left:798px;top:496px;width:9px;height:8.7px;background:#5a5a5a;border-top:3px solid #4a9fd8"></div>
<div class="abs" style="left:813px;top:485px;width:13.3px;height:11.7px;background:#5a5a5a;border-top:3px solid #4a9fd8"></div>
<div class="abs" style="left:829px;top:476px;width:14px;height:11.7px;background:#5a5a5a;border-top:3px solid #4a9fd8"></div>
<div class="abs" style="left:876px;top:476px;width:8px;height:6.7px;background:#5a5a5a;border-top:3px solid #b03040"></div>
<div class="abs" style="left:830px;top:496px;width:8px;height:11.7px;background:#5a5a5a;border-top:3px solid #4a9fd8"></div>
<div class="abs" style="left:829px;top:518px;width:8px;height:7.7px;background:#5a5a5a;border-top:3px solid #7a5fcf"></div>
<div class="abs" style="left:841px;top:515px;width:9px;height:6.7px;background:#5a5a5a;border-top:3px solid #7a5fcf"></div>
<div class="abs" style="left:860px;top:515px;width:8px;height:9.7px;background:#5a5a5a;border-top:3px solid #7a5fcf"></div>
<div class="abs" style="left:849px;top:476px;width:14px;height:35px;background:#5a5a5a;border:1px solid #f4f4f4"><div style="height:2px;background:#4fa04f"></div></div>
<div class="abs" style="left:826px;top:459px;width:70px;height:42px;border:1px solid #b8b8b8"></div>
<div class="abs" style="left:0px;top:597px;width:1200px;height:1px;background:rgba(28,28,28,0.55);"></div>
<div class="abs" style="left:0px;top:598px;width:1200px;height:2px;background:#1c1c1c;"></div>
<div class="abs" style="left:10px;top:589px;width:962px;height:8px;background:rgba(255,255,255,0.01);border-radius:4px;border:1px solid rgba(255,255,255,0.05);border-bottom:none;border-radius:4px 4px 0 0;"></div>
<div class="abs" style="left:3px;top:1px;width:1197px;height:25px;background:#424242;border-radius:6px 6px 0 0;"></div>
<div class="abs" style="left:11px;top:5px;width:30px;height:18px;background:#282828;border-radius:3px;"></div>
<svg class="abs" style="left:13px;top:6px;" width="18" height="17" viewBox="0 0 18 17"><circle cx="9" cy="8.5" r="6.8" fill="none" stroke="#dcdcdc" stroke-width="1.1"/><path d="M5.2 7.2 Q5.8 5.2 7.6 4.3" fill="none" stroke="#dcdcdc" stroke-width="1.8"/><rect x="9.2" y="3" width="1.6" height="1.6" fill="#dcdcdc"/></svg>
<svg class="abs" style="left:29.5px;top:9px;" width="12" height="12" viewBox="0 0 12 12"><path d="M2.8 4.4 L6 7.6 L9.2 4.4" fill="none" stroke="#d0d0d0" stroke-width="1.2"/></svg>
<div class="abs" style="left:48px;top:5px;width:87px;height:18px;background:#282828;border-radius:3px;"></div>
<svg class="abs" style="left:51px;top:6px;" width="17" height="16" viewBox="0 0 17 16"><path d="M1.5 4.5 V1.5 H4.5 M11.5 1.5 H14.5 V4.5 M14.5 11.5 V14.5 H11.5 M4.5 14.5 H1.5 V11.5" fill="none" stroke="#bdbdbd" stroke-width="1.2"/><rect x="4" y="4" width="8.2" height="8" fill="#dcdcdc"/></svg>
<div class="t" style="left:73.30px;top:8.08px;font-size:11.6px;color:#e0e0e0;letter-spacing:-0.087px;">Object</div>
<svg class="abs" style="left:123.5px;top:9px;" width="12" height="12" viewBox="0 0 12 12"><path d="M2.8 4.4 L6 7.6 L9.2 4.4" fill="none" stroke="#d0d0d0" stroke-width="1.2"/></svg>
<div class="t" style="left:148.00px;top:8.08px;font-size:11.6px;color:#d9d9d9;letter-spacing:-0.033px;">View</div>
<div class="t" style="left:188.00px;top:8.08px;font-size:11.6px;color:#d9d9d9;letter-spacing:-0.206px;">Select</div>
<div class="t" style="left:234.00px;top:8.08px;font-size:11.6px;color:#d9d9d9;letter-spacing:-0.546px;">Add</div>
<div class="t" style="left:268.00px;top:8.08px;font-size:11.6px;color:#d9d9d9;letter-spacing:-0.432px;">Node</div>
<div class="abs" style="left:308px;top:8px;width:12px;height:12px;background:#5680c2;border-radius:3px;"></div>
<svg class="abs" style="left:308px;top:8px;" width="12" height="12" viewBox="0 0 12 12"><path d="M2.6 6.2 L5 8.6 L9.6 3.2" fill="none" stroke="#fff" stroke-width="1.6"/></svg>
<div class="t" style="left:324.60px;top:8.08px;font-size:11.6px;color:#e6e6e6;letter-spacing:-0.542px;">Use Nodes</div>
<div class="abs" style="left:430px;top:5px;width:78px;height:18px;background:#282828;border-radius:3px;"></div>
<div class="t" style="left:437.00px;top:8.08px;font-size:11.6px;color:#e0e0e0;letter-spacing:-0.277px;">Slot 1</div>
<svg class="abs" style="left:496px;top:9px;" width="12" height="12" viewBox="0 0 12 12"><path d="M2.8 4.4 L6 7.6 L9.2 4.4" fill="none" stroke="#d0d0d0" stroke-width="1.2"/></svg>
<div class="abs" style="left:515px;top:5px;width:30px;height:18px;background:#282828;border-radius:3px;border-radius:3px 0 0 3px;"></div>
<svg class="abs" style="left:518px;top:7px;" width="16" height="15" viewBox="0 0 16 15"><circle cx="7.8" cy="7.2" r="6.3" fill="#1f1f1f" stroke="#dcdcdc" stroke-width="1.1"/><path d="M7.8 0.9 A6.3 6.3 0 0 0 1.7 6.3 Q4.5 9.4 7.8 9.4 Z" fill="#dcdcdc"/><path d="M7.8 9.4 Q11.5 9.4 13.9 6.6 A6.3 6.3 0 0 1 7.8 13.5 Z" fill="#dcdcdc"/></svg>
<svg class="abs" style="left:533.5px;top:9px;" width="12" height="12" viewBox="0 0 12 12"><path d="M3.2 4.6 L6 7.4 L8.8 4.6" fill="none" stroke="#d0d0d0" stroke-width="1.2"/></svg>
<div class="abs" style="left:546px;top:5px;width:119px;height:18px;background:#1d1d1d;"></div>
<div class="t" style="left:553.75px;top:8.08px;font-size:11.6px;color:#e6e6e6;letter-spacing:-0.125px;">my_mat</div>
<div class="abs" style="left:666px;top:5px;width:19px;height:18px;background:#545454;"></div>
<svg class="abs" style="left:666px;top:5px;" width="19" height="18" viewBox="0 0 19 18"><path d="M9.5 2.5 L14.5 4.6 V9 Q14.5 13.3 9.5 15.6 Q4.5 13.3 4.5 9 V4.6 Z" fill="none" stroke="#bcbcbc" stroke-width="1.1"/></svg>
<div class="abs" style="left:686px;top:5px;width:19px;height:18px;background:#545454;"></div>
<svg class="abs" style="left:686px;top:5px;" width="19" height="18" viewBox="0 0 19 18"><path d="M6.5 6 H4 V15.6 H11.5 V13.2" fill="none" stroke="#e0e0e0" stroke-width="1.1"/><path d="M6.8 2.5 H12 L14.8 5.3 V12.8 H6.8 Z" fill="none" stroke="#e0e0e0" stroke-width="1.1"/><path d="M12 2.5 L14.8 5.3 H12 Z" fill="#e0e0e0"/></svg>
<div class="abs" style="left:706px;top:5px;width:19px;height:18px;background:#545454;border-radius:0 3px 3px 0;"></div>
<svg class="abs" style="left:706px;top:5px;" width="19" height="18" viewBox="0 0 19 18"><path d="M5.5 5 L13.5 13 M13.5 5 L5.5 13" stroke="#e0e0e0" stroke-width="1.1"/></svg>
<svg class="abs" style="left:732px;top:6px;" width="18" height="16" viewBox="0 0 18 16"><path d="M1.5 14.5 L6 10" stroke="#b8b8b8" stroke-width="1.1"/><path d="M10.8 1.5 L15.8 6.5 L13.8 8.2 L12 7.4 L9.4 10 L9.6 12.6 L8.5 13.4 L3.5 8.4 L4.2 7.3 L6.9 7.5 L9.5 4.9 L8.9 3.3 Z" fill="none" stroke="#b8b8b8" stroke-width="1.1"/></svg>
<div class="abs" style="left:1117px;top:5px;width:18px;height:18px;background:#494949;border-radius:3px;"></div>
<svg class="abs" style="left:1117px;top:5px;" width="18" height="18" viewBox="0 0 18 18"><path d="M3 6.7 L7.6 2.1 L12.2 6.7 M7.6 2.1 V15.4 H15" fill="none" stroke="#9a9a9a" stroke-width="1.1"/></svg>
<div class="abs" style="left:1142px;top:5px;width:18px;height:18px;background:#575757;border-radius:3px 0 0 3px;"></div>
<svg class="abs" style="left:1142px;top:5px;" width="18" height="18" viewBox="0 0 18 18"><g transform="translate(10.2 7.3) rotate(45)"><path d="M-5 5.5 V0 A5 5 0 0 1 5 0 V5.5 H2.1 V0 A2.1 2.1 0 0 0 -2.1 0 V5.5 Z" fill="none" stroke="#dadada" stroke-width="1.05"/></g></svg>
<div class="abs" style="left:1160px;top:5px;width:32px;height:18px;background:#282828;border-radius:0 3px 3px 0;"></div>
<svg class="abs" style="left:1162px;top:5px;" width="18" height="18" viewBox="0 0 18 18"><rect x="4" y="3" width="5" height="5" fill="#e0e0e0"/><path d="M6.5 9 V16 M13.5 2 V16 M10 5.5 H17 M3 12.5 H17" stroke="#d0d0d0" stroke-width="1"/></svg>
<svg class="abs" style="left:1180.5px;top:9px;" width="12" height="12" viewBox="0 0 12 12"><path d="M2.8 4.4 L6 7.6 L9.2 4.4" fill="none" stroke="#e8e8e8" stroke-width="1.4"/></svg>
<div class="abs" style="left:981px;top:26px;width:199px;height:572px;background:#424242;"></div>
<div class="abs" style="left:981px;top:26px;width:199px;height:195px;background:#424242;"></div>
<div class="abs" style="left:981px;top:74px;width:199px;height:147px;background:#373737;"></div>
<div class="abs" style="left:1180px;top:26px;width:20px;height:571px;background:#232323;border-radius:0 0 5px 0;"></div>
<div class="abs" style="left:1180px;top:27.5px;width:16px;height:43.5px;background:#2d2d2d;border-radius:0 4px 4px 0;"></div>
<div class="t" style="left:1188.5px;top:49.25px;font-size:11.6px;color:#dcdcdc;transform:translate(-50%,-50%) rotate(-90deg);">Node</div>
<div class="abs" style="left:1180px;top:78px;width:16px;height:33px;background:#2d2d2d;border-radius:0 4px 4px 0;"></div>
<div class="t" style="left:1188.5px;top:94.5px;font-size:11.6px;color:#dcdcdc;transform:translate(-50%,-50%) rotate(-90deg);">Tool</div>
<div class="abs" style="left:1180px;top:117.5px;width:16px;height:37.5px;background:#474747;border-radius:0 4px 4px 0;"></div>
<div class="t" style="left:1188.5px;top:136.25px;font-size:11.6px;color:#dcdcdc;transform:translate(-50%,-50%) rotate(-90deg);">View</div>
<div class="abs" style="left:1180px;top:162px;width:16px;height:50px;background:#2d2d2d;border-radius:0 4px 4px 0;"></div>
<div class="t" style="left:1188.5px;top:187.0px;font-size:11.6px;color:#dcdcdc;transform:translate(-50%,-50%) rotate(-90deg);">Options</div>
<div class="abs" style="left:1180px;top:220px;width:16px;height:90px;background:#2d2d2d;border-radius:0 4px 4px 0;"></div>
<div class="t" style="left:1188.5px;top:265.0px;font-size:11.6px;color:#dcdcdc;transform:translate(-50%,-50%) rotate(-90deg);">Node Wrangler</div>
<svg class="abs" style="left:989px;top:33px;" width="10" height="10" viewBox="0 0 10 10"><path d="M1 2 L8 5.3 L1 8.6 Z" fill="#b4b4b4"/></svg>
<div class="abs" style="left:1002px;top:32px;width:12px;height:12px;background:#5680c2;border-radius:3px;"></div>
<svg class="abs" style="left:1002px;top:32px;" width="12" height="12" viewBox="0 0 12 12"><path d="M2.6 6.2 L5 8.6 L9.6 3.2" fill="none" stroke="#fff" stroke-width="1.6"/></svg>
<div class="t" style="left:1018.00px;top:32.38px;font-size:13px;color:#e6e6e6;letter-spacing:-0.151px;">Annotations</div>
<svg class="abs" style="left:989px;top:57px;" width="10" height="10" viewBox="0 0 10 10"><path d="M1 2 L8 2 L4.5 8.5 Z" fill="#b4b4b4"/></svg>
<div class="abs" style="left:1002px;top:56px;width:12px;height:12px;background:#5680c2;border-radius:3px;"></div>
<svg class="abs" style="left:1002px;top:56px;" width="12" height="12" viewBox="0 0 12 12"><path d="M2.6 6.2 L5 8.6 L9.6 3.2" fill="none" stroke="#fff" stroke-width="1.6"/></svg>
<div class="t" style="left:1018.00px;top:56.38px;font-size:13px;color:#e6e6e6;letter-spacing:-0.160px;">Minimap</div>
<svg class="abs" style="left:1163px;top:35px;" width="11" height="7" viewBox="0 0 11 7"><rect x="0.5" y="0.5" width="1.3" height="1.3" fill="#9a9a9a"/><rect x="0.5" y="2.8" width="1.3" height="1.3" fill="#9a9a9a"/><rect x="0.5" y="5.1" width="1.3" height="1.3" fill="#9a9a9a"/><rect x="3.3" y="0.5" width="1.3" height="1.3" fill="#9a9a9a"/><rect x="3.3" y="2.8" width="1.3" height="1.3" fill="#9a9a9a"/><rect x="3.3" y="5.1" width="1.3" height="1.3" fill="#9a9a9a"/><rect x="6.1" y="0.5" width="1.3" height="1.3" fill="#9a9a9a"/><rect x="6.1" y="2.8" width="1.3" height="1.3" fill="#9a9a9a"/><rect x="6.1" y="5.1" width="1.3" height="1.3" fill="#9a9a9a"/><rect x="8.9" y="0.5" width="1.3" height="1.3" fill="#9a9a9a"/><rect x="8.9" y="2.8" width="1.3" height="1.3" fill="#9a9a9a"/><rect x="8.9" y="5.1" width="1.3" height="1.3" fill="#9a9a9a"/></svg>
<svg class="abs" style="left:1163px;top:59px;" width="11" height="7" viewBox="0 0 11 7"><rect x="0.5" y="0.5" width="1.3" height="1.3" fill="#9a9a9a"/><rect x="0.5" y="2.8" width="1.3" height="1.3" fill="#9a9a9a"/><rect x="0.5" y="5.1" width="1.3" height="1.3" fill="#9a9a9a"/><rect x="3.3" y="0.5" width="1.3" height="1.3" fill="#9a9a9a"/><rect x="3.3" y="2.8" width="1.3" height="1.3" fill="#9a9a9a"/><rect x="3.3" y="5.1" width="1.3" height="1.3" fill="#9a9a9a"/><rect x="6.1" y="0.5" width="1.3" height="1.3" fill="#9a9a9a"/><rect x="6.1" y="2.8" width="1.3" height="1.3" fill="#9a9a9a"/><rect x="6.1" y="5.1" width="1.3" height="1.3" fill="#9a9a9a"/><rect x="8.9" y="0.5" width="1.3" height="1.3" fill="#9a9a9a"/><rect x="8.9" y="2.8" width="1.3" height="1.3" fill="#9a9a9a"/><rect x="8.9" y="5.1" width="1.3" height="1.3" fill="#9a9a9a"/></svg>
<div class="t" style="left:992.90px;top:86.08px;font-size:11.6px;color:#e0e0e0;letter-spacing:-0.267px;">Nested Level</div>
<div class="abs" style="left:1068px;top:83px;width:104px;height:18px;background:#595959;border-radius:4px;"></div>
<div class="t" style="left:1116.77px;top:86.08px;font-size:11.6px;color:#e0e0e0;letter-spacing:0.000px;">1</div>
<div class="t" style="left:1018.90px;top:112.08px;font-size:11.6px;color:#e0e0e0;letter-spacing:-0.346px;">Position</div>
<div class="abs" style="left:1068px;top:109px;width:104px;height:18px;background:#595959;border-radius:4px;"></div>
<div class="abs" style="left:1068px;top:109px;width:51px;height:18px;background:#5680c2;border-radius:4px;border-radius:4px 0 0 4px;"></div>
<div class="t" style="left:1075.13px;top:112.08px;font-size:11.6px;color:#f0f0f0;letter-spacing:0.000px;">Bottom</div>
<div class="t" style="left:1136.65px;top:112.08px;font-size:11.6px;color:#e0e0e0;letter-spacing:0.000px;">Top</div>
<div class="abs" style="left:1068px;top:135px;width:104px;height:78px;background:#595959;border-radius:4px;"></div>
<div class="abs" style="left:1068px;top:154px;width:104px;height:1px;background:#484848;"></div>
<div class="abs" style="left:1068px;top:173.5px;width:104px;height:1px;background:#484848;"></div>
<div class="abs" style="left:1068px;top:193px;width:104px;height:1px;background:#484848;"></div>
<div class="t" style="left:995.16px;top:138.08px;font-size:11.6px;color:#e0e0e0;letter-spacing:-0.133px;">Height Ratio</div>
<div class="t" style="left:1108.71px;top:138.08px;font-size:11.6px;color:#e0e0e0;letter-spacing:0.000px;">0.59</div>
<div class="t" style="left:1007.13px;top:158.08px;font-size:11.6px;color:#e0e0e0;letter-spacing:-0.143px;">Width Min</div>
<div class="t" style="left:1102.59px;top:158.08px;font-size:11.6px;color:#e0e0e0;letter-spacing:0.000px;">150 px</div>
<div class="t" style="left:1036.03px;top:177.58px;font-size:11.6px;color:#e0e0e0;letter-spacing:-0.183px;">Max</div>
<div class="t" style="left:1102.59px;top:177.58px;font-size:11.6px;color:#e0e0e0;letter-spacing:0.000px;">500 px</div>
<div class="t" style="left:1047.09px;top:197.08px;font-size:11.6px;color:#e0e0e0;letter-spacing:0.000px;">%</div>
<div class="abs" style="left:1068px;top:194px;width:78px;height:19px;background:#5680c2;border-radius:0 0 0 4px;"></div>
<div class="t" style="left:1108.39px;top:197.08px;font-size:11.6px;color:#e0e0e0;letter-spacing:0.000px;">38%</div>
</body></html>
